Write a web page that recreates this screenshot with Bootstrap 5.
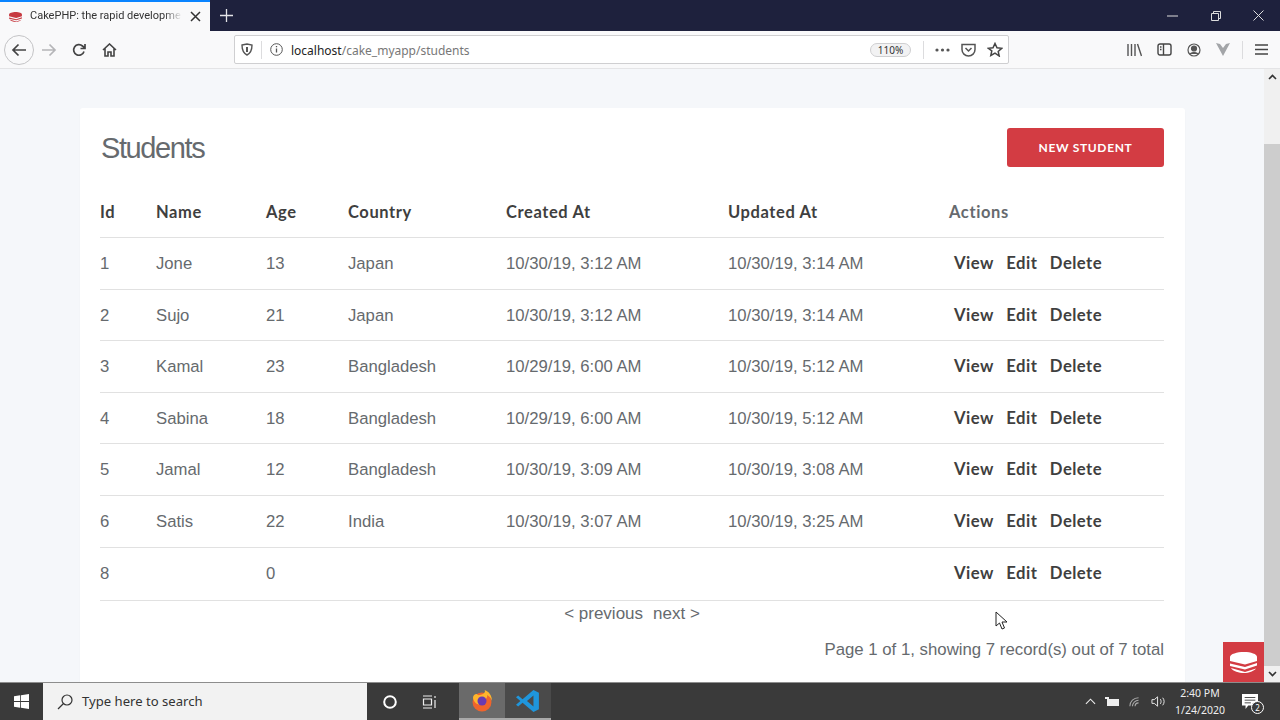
<!DOCTYPE html>
<html lang="en">
<head>
    <meta charset="UTF-8">
    <title>CakePHP: the rapid development php framework</title>
    <link href="https://cdn.jsdelivr.net/npm/bootstrap@5.3.0/dist/css/bootstrap.min.css" rel="stylesheet">
    <style>
        html, body { height: 720px; overflow: hidden; }
        body { font-family: "Liberation Sans", Arial, sans-serif; color: #666a6e; background: #f5f7fa; }
        svg { display: block; flex-shrink: 0; }

        .tabstrip { height: 31px; background: #1e213d; }
        .tab-active { width: 210px; background: #f9f9fa; border-top: 2px solid #0a84ff; padding: 0 9px; font-family: "Roboto", sans-serif; font-size: 11px; color: #333; }
        .tab-title { width: 152px; white-space: nowrap; -webkit-mask-image: linear-gradient(90deg, #000 88%, transparent); mask-image: linear-gradient(90deg, #000 88%, transparent); }
        .tab-new { width: 32px; }
        .win-btn { width: 43px; }

        .toolbar { height: 38px; background: #f9f9fa; border-bottom: 1px solid #e4e4e6; }
        .tool-left { width: 234px; padding-left: 4px; }
        .tool-btn { width: 30px; height: 30px; }
        .back-btn { border: 1px solid #c4c4c6; border-radius: 50%; }
        .urlbar { width: 775px; height: 29px; background: #fff; border: 1px solid #cfcfd1; border-radius: 2px; font-family: "Noto Sans", sans-serif; font-size: 12px; color: #777; padding: 0 5px 0 6px; }
        .urlbar b { font-weight: 400; color: #222; }
        .url-text { margin-left: 8px; padding-top: 2px; }
        .url-sep { width: 1px; height: 18px; background: #dcdcde; }
        .zoom-pill { width: 41px; height: 14px; margin-right: 12px; border: 1px solid #cfcfd1; border-radius: 8px; background: #f2f2f3; font-size: 10px; line-height: 12px; text-align: center; color: #333; }
        .url-act { margin-left: 11px; }
        .tool-right { width: 271px; padding: 0 12px 0 118px; }
        .tool-right .url-act { margin-left: 15px; }
        .tool-right .url-sep { margin-left: 12px; }

        .viewport { height: 613px; }
        .page-pane { min-width: 0; position: relative; padding: 39px 80px 0; overflow: hidden; }
        .sheet { background: #fff; width: 1105px; height: 600px; padding: 20px 21px 20px 20px; border-radius: 3px; box-shadow: 0 1px 2px rgba(0, 0, 0, .03); }
        .sheet-title { font-size: 29px; line-height: 40px; letter-spacing: -1.4px; margin: 0 0 0 1px; color: #666a6e; font-weight: 400; }
        .new-btn { width: 157px; height: 39px; line-height: 39px; padding: 0; background: #d33c43; color: #fff; border: 0; border-radius: 3px; font-family: "Lato", sans-serif; font-size: 12px; font-weight: 700; letter-spacing: .65px; text-transform: uppercase; }

        .student-table { table-layout: fixed; width: 1064px; margin: 20px 0 0; font-size: 16.7px; --bs-table-color: #666a6e; --bs-table-border-color: #e1e1e1; }
        .student-table th { height: 49px; padding: 1px 0 0; font-family: "Lato", sans-serif; font-size: 16.5px; font-weight: 700; letter-spacing: .6px; color: #3f3f40; vertical-align: middle; }
        .student-table th.th-actions { color: #666a6e; }
        .student-table td { height: 51.6px; padding: .5px 0 0; vertical-align: middle; color: #666a6e; }
        .student-table tr:first-child td { height: 52.2px; }
        .student-table tr:last-child td { height: 53px; }
        .row-links { font-family: "Lato", sans-serif; font-weight: 700; letter-spacing: .45px; padding-left: 5px; display: flex; gap: 12.5px; }
        .row-links a { color: #3f3f40; text-decoration: none; }

        .pager { margin-top: 3px; font-size: 17px; line-height: 20px; gap: 10px; }
        .pager a { color: #666a6e; text-decoration: none; }
        .counter { margin-top: 16px; font-size: 16.8px; line-height: 20px; text-align: right; }

        .cake-logo { position: absolute; left: 1223px; top: 573px; width: 41px; height: 40px; background: #d33c43; }
        .cursor-mark { position: absolute; left: 995px; top: 542px; }

        .scroll-rail { width: 16px; background: #f0f0f0; }
        .scroll-btn { height: 17px; }
        .scroll-thumb { height: 538px; margin-top: 58px; background: #cdcdcd; }
        .scroll-space { min-height: 0; }

        .taskbar { height: 38px; background: #3a3a3a; font-family: "Noto Sans", sans-serif; color: #fff; border-top: 1px solid #8d8d8d; }
        .start-btn { width: 43px; }
        .search-box { width: 324px; background: #f2f2f2; color: #333; font-size: 13.1px; padding-left: 14px; gap: 9px; }
        .task-item { width: 46px; }
        .task-on { background: #6a6a6a; border-bottom: 2px solid #a9a9a9; }
        .task-open { background: #4a4a4a; border-bottom: 2px solid #a9a9a9; }
        .tray { gap: 9px; padding-right: 20px; }
        .clock { width: 50px; font-size: 10.5px; line-height: 17px; text-align: center; color: #eee; margin-right: 8px; white-space: nowrap; }
        .notify { position: relative; width: 18px; }
        .notify-num { position: absolute; right: -4px; bottom: -4px; width: 13px; height: 13px; border-radius: 50%; background: #3a3a3a; border: 1px solid #fff; font-size: 8px; line-height: 11px; text-align: center; }
    </style>
</head>
<body>
    <!-- window title / tabs -->
    <div class="tabstrip d-flex">
        <div class="tab-active d-flex align-items-center gap-2">
            <svg width="13" height="10" viewBox="0 0 27 21" fill="#c73a41"><path d="M0 5C0 2 7 0 14 0s13 2 13 5v4l-12 3.500L0 9z"/><path d="M0 11.500L15 15l12-4v2.500L15 17.500 0 14z"/><path d="M1 16l14 4 11-3.500c-2 2.500-7 4.500-12 4.500S3 19.500 1 16z"/></svg>
            <div class="tab-title">CakePHP: the rapid developme</div>
            <svg class="ms-auto" width="11" height="11" viewBox="0 0 11 11"><path d="M1 1l9 9M10 1l-9 9" stroke="#333" stroke-width="1.500"/></svg>
        </div>
        <div class="tab-new d-flex align-items-center justify-content-center">
            <svg width="13" height="13" viewBox="0 0 13 13"><path d="M6.500 0v13M0 6.500h13" stroke="#e4e4e8" stroke-width="1.300"/></svg>
        </div>
        <div class="ms-auto d-flex">
            <div class="win-btn d-flex align-items-center justify-content-center"><svg width="11" height="2"><path d="M0 1h11" stroke="#ddd"/></svg></div>
            <div class="win-btn d-flex align-items-center justify-content-center"><svg width="10" height="10" viewBox="0 0 10 10" fill="none" stroke="#ddd"><path d="M.5 2.500h7v7h-7zM2.500 2.500v-2h7v7h-2"/></svg></div>
            <div class="win-btn d-flex align-items-center justify-content-center"><svg width="11" height="11" viewBox="0 0 11 11"><path d="M.5.5l10 10M10.500.5l-10 10" stroke="#ddd"/></svg></div>
        </div>
    </div>

    <!-- browser toolbar -->
    <div class="toolbar d-flex align-items-center">
        <div class="tool-left d-flex align-items-center">
            <div class="tool-btn back-btn d-flex align-items-center justify-content-center">
                <svg width="16" height="14" viewBox="0 0 16 14" fill="none" stroke="#444" stroke-width="1.700"><path d="M15 7H2M7.500 1.500L2 7l5.500 5.500"/></svg>
            </div>
            <div class="tool-btn d-flex align-items-center justify-content-center">
                <svg width="16" height="14" viewBox="0 0 16 14" fill="none" stroke="#b5b5b8" stroke-width="1.700"><path d="M1 7h13M8.500 1.500L14 7l-5.500 5.500"/></svg>
            </div>
            <div class="tool-btn d-flex align-items-center justify-content-center">
                <svg width="14" height="14" viewBox="0 0 14 14" fill="none" stroke="#444" stroke-width="1.700"><path d="M12 8.500A5.300 5.300 0 1 1 10.500 3L13 5M13 1v4.500H8.500"/></svg>
            </div>
            <div class="tool-btn d-flex align-items-center justify-content-center">
                <svg width="15" height="14" viewBox="0 0 15 14" fill="none" stroke="#444" stroke-width="1.600"><path d="M1 7l6.500-6L14 7M3 5.500V13h3V9h3v4h3V5.500"/></svg>
            </div>
        </div>
        <div class="urlbar d-flex align-items-center">
            <svg width="12" height="13" viewBox="0 0 12 13" fill="none" stroke="#555" stroke-width="1.400"><path d="M1 2l5-1 5 1c0 5-1 8-5 10C2 10 1 7 1 2z"/><path d="M6 4v5" stroke-width="2"/></svg>
            <div class="url-sep ms-2 me-2"></div>
            <svg width="13" height="13" viewBox="0 0 13 13" fill="none" stroke="#555"><circle cx="6.500" cy="6.500" r="5.800"/><path d="M6.500 5.500v4M6.500 3v1.300" stroke-width="1.300"/></svg>
            <div class="url-text"><b>localhost</b>/cake_myapp/students</div>
            <div class="zoom-pill ms-auto">110%</div>
            <div class="url-sep"></div>
            <svg class="url-act" width="15" height="4" viewBox="0 0 15 4" fill="#555"><circle cx="2" cy="2" r="1.600"/><circle cx="7.500" cy="2" r="1.600"/><circle cx="13" cy="2" r="1.600"/></svg>
            <svg class="url-act" width="15" height="14" viewBox="0 0 15 14" fill="none" stroke="#555" stroke-width="1.500"><path d="M1 1.500h13v5a6.500 6.500 0 0 1-13 0z"/><path d="M4.500 5l3 3 3-3"/></svg>
            <svg class="url-act" width="16" height="15" viewBox="0 0 16 15" fill="none" stroke="#444" stroke-width="1.500"><path d="M8 1.500l2 4.300 4.700.5-3.500 3.100 1 4.600L8 11.200 3.800 13.500l1-4.600L1.300 6.300 6 5.800z"/></svg>
        </div>
        <div class="tool-right d-flex align-items-center">
            <svg width="15" height="14" viewBox="0 0 15 14" fill="none" stroke="#555" stroke-width="1.400"><path d="M1 1v12M4.500 1v12M8 1v12M10.500 1l4 12"/></svg>
            <svg class="url-act" width="15" height="13" viewBox="0 0 15 13" fill="none" stroke="#444" stroke-width="1.400"><rect x="1" y="1" width="13" height="11" rx="2"/><path d="M6.500 1v11M3 4h1.500M3 6.500h1.500"/></svg>
            <svg class="url-act" width="14" height="14" viewBox="0 0 14 14" fill="none" stroke="#555" stroke-width="1.200"><circle cx="7" cy="7" r="6"/><circle cx="7" cy="5.500" r="2.500" fill="#555"/><path d="M3 11c1-2 7-2 8 0" fill="#555"/></svg>
            <svg class="url-act" width="14" height="13" viewBox="0 0 14 13"><path d="M0 0l4 1 3 4 3-4 4-1-7 13z" fill="#a3a5a8"/></svg>
            <div class="url-sep"></div>
            <svg class="ms-auto" width="13" height="11" viewBox="0 0 13 11" stroke="#444" stroke-width="1.500"><path d="M0 1h13M0 5.500h13M0 10h13"/></svg>
        </div>
    </div>

    <!-- page -->
    <div class="viewport d-flex">
        <div class="page-pane flex-grow-1">
            <div class="sheet">
                <div class="d-flex justify-content-between">
                    <h3 class="sheet-title">Students</h3>
                    <a href="#" class="new-btn btn">New Student</a>
                </div>
                <table class="table student-table">
                    <colgroup>
                        <col style="width:56px"><col style="width:110px"><col style="width:82px"><col style="width:158px"><col style="width:222px"><col style="width:221px"><col>
                    </colgroup>
                    <thead>
                        <tr><th>Id</th><th>Name</th><th>Age</th><th>Country</th><th>Created At</th><th>Updated At</th><th class="th-actions">Actions</th></tr>
                    </thead>
                    <tbody id="rows"></tbody>
                </table>
                <div class="pager d-flex justify-content-center"><a href="#">&lt; previous</a><a href="#">next &gt;</a></div>
                <p class="counter">Page 1 of 1, showing 7 record(s) out of 7 total</p>
            </div>
            <div class="cake-logo d-flex align-items-center justify-content-center">
                <svg width="27" height="21" viewBox="0 0 27 21" fill="#fff"><path d="M0 5C0 2 7 0 14 0s13 2 13 5v4l-12 3.500L0 9z"/><path d="M0 11.500L15 15l12-4v2.500L15 17.500 0 14z"/><path d="M1 16l14 4 11-3.500c-2 2.500-7 4.500-12 4.500S3 19.500 1 16z"/></svg>
            </div>
            <svg class="cursor-mark" width="13" height="19" viewBox="0 0 13 19"><path d="M1 1v14l3.500-3 2.500 6 2.500-1-2.500-6H12z" fill="#fff" stroke="#222"/></svg>
        </div>
        <div class="scroll-rail d-flex flex-column">
            <div class="scroll-btn d-flex align-items-center justify-content-center"><svg width="9" height="6" viewBox="0 0 9 6" fill="none" stroke="#333" stroke-width="1.600"><path d="M1 5l3.500-3.500L8 5"/></svg></div>
            <div class="scroll-thumb"></div>
            <div class="scroll-space flex-grow-1"></div>
            <div class="scroll-btn d-flex align-items-center justify-content-center"><svg width="9" height="6" viewBox="0 0 9 6" fill="none" stroke="#333" stroke-width="1.600"><path d="M1 1l3.500 3.500L8 1"/></svg></div>
        </div>
    </div>

    <!-- windows taskbar -->
    <div class="taskbar d-flex">
        <div class="start-btn d-flex align-items-center justify-content-center">
            <svg width="15" height="15" viewBox="0 0 15 15" fill="#fff"><path d="M0 2.200L6.200 1.300V7H0zM7 1.200L15 0v7H7zM0 8h6.200v5.700L0 12.800zM7 8h8v7L7 13.800z"/></svg>
        </div>
        <div class="search-box d-flex align-items-center">
            <svg width="16" height="16" viewBox="0 0 16 16" fill="none" stroke="#333" stroke-width="1.200"><circle cx="10" cy="6" r="5"/><path d="M6.500 9.500L1 15"/></svg>
            <span>Type here to search</span>
        </div>
        <div class="task-item d-flex align-items-center justify-content-center">
            <svg width="14" height="14" viewBox="0 0 14 14" fill="none" stroke="#fff" stroke-width="2"><circle cx="7" cy="7" r="5.800"/></svg>
        </div>
        <div class="task-item d-flex align-items-center justify-content-start ps-2">
            <svg width="16" height="14" viewBox="0 0 16 14" fill="none" stroke="#eee" stroke-width="1.200"><path d="M2 1h9M2 13h9M2.500 4h8v6h-8zM14 1v2M14 5v8"/></svg>
        </div>
        <div class="task-item task-on d-flex align-items-center justify-content-center">
            <svg width="22" height="22" viewBox="0 0 22 22"><circle cx="11" cy="12" r="9.500" fill="#f0642c"/><path d="M6 4c1 2 3 1 6 0 3-2 2-4 1-4 5 1 8 6 8 11-1-3-3-5-5-6 1 3-2 5-5 5-3 1-4 3-1 5-3 0-7-2-8-7 0-2 1-4 4-4z" fill="#ffb52c"/><circle cx="11" cy="11" r="4.500" fill="#6a3ab2"/></svg>
        </div>
        <div class="task-item task-open d-flex align-items-center justify-content-center">
            <svg width="24" height="24" viewBox="0 0 22 22"><path d="M16 1l5 2.500v15L16 21 6 12.500 2 16l-2-1.500L4 11 0 7.500 2 6l4 3.500z" fill="#1f96dc"/><path d="M16 6l-6 5 6 5z" fill="#4a4a4a"/></svg>
        </div>
        <div class="tray ms-auto d-flex align-items-center">
            <svg width="11" height="7" viewBox="0 0 12 7" fill="none" stroke="#eee" stroke-width="1.200"><path d="M1 6l5-5 5 5"/></svg>
            <svg width="15" height="11" viewBox="0 0 15 11" fill="#eee"><path d="M0 1h4v2H0zM2 3h12v7H2z"/></svg>
            <svg width="13" height="12" viewBox="0 0 15 12" fill="none" stroke="#aaa" stroke-width="1.200"><path d="M1 11A10 10 0 0 1 11 1M4 11a7 7 0 0 1 7-7M7 11a4 4 0 0 1 4-4"/></svg>
            <svg width="15" height="13" viewBox="0 0 16 13" fill="none" stroke="#eee"><path d="M1 4.500h2.500L7 1.500v10L3.500 8.500H1zM10 4c1 1.500 1 3.500 0 5M12.500 2.500c2 2.500 2 5.500 0 8"/></svg>
            <div class="clock">2:40 PM<br>1/24/2020</div>
            <div class="notify">
                <svg width="16" height="17" viewBox="0 0 18 17" fill="#fff"><path d="M0 0h18v13H7l-3 4v-4H0z"/><path d="M3 4h12M3 7h12M3 10h7" stroke="#3a3a3a"/></svg>
                <span class="notify-num">2</span>
            </div>
        </div>
    </div>

    <script>
        const students = [
            [1, "Jone", 13, "Japan", "10/30/19, 3:12 AM", "10/30/19, 3:14 AM"],
            [2, "Sujo", 21, "Japan", "10/30/19, 3:12 AM", "10/30/19, 3:14 AM"],
            [3, "Kamal", 23, "Bangladesh", "10/29/19, 6:00 AM", "10/30/19, 5:12 AM"],
            [4, "Sabina", 18, "Bangladesh", "10/29/19, 6:00 AM", "10/30/19, 5:12 AM"],
            [5, "Jamal", 12, "Bangladesh", "10/30/19, 3:09 AM", "10/30/19, 3:08 AM"],
            [6, "Satis", 22, "India", "10/30/19, 3:07 AM", "10/30/19, 3:25 AM"],
            [8, "", 0, "", "", ""]
        ];
        const rows = document.getElementById("rows");
        students.forEach(s => {
            rows.innerHTML += `<tr>${s.map(v => `<td>${v}</td>`).join("")}
                <td><div class="row-links"><a href="#">View</a><a href="#">Edit</a><a href="#">Delete</a></div></td></tr>`;
        });
    </script>
    <script src="https://cdn.jsdelivr.net/npm/bootstrap@5.3.0/dist/js/bootstrap.bundle.min.js"></script>
</body>
</html>
